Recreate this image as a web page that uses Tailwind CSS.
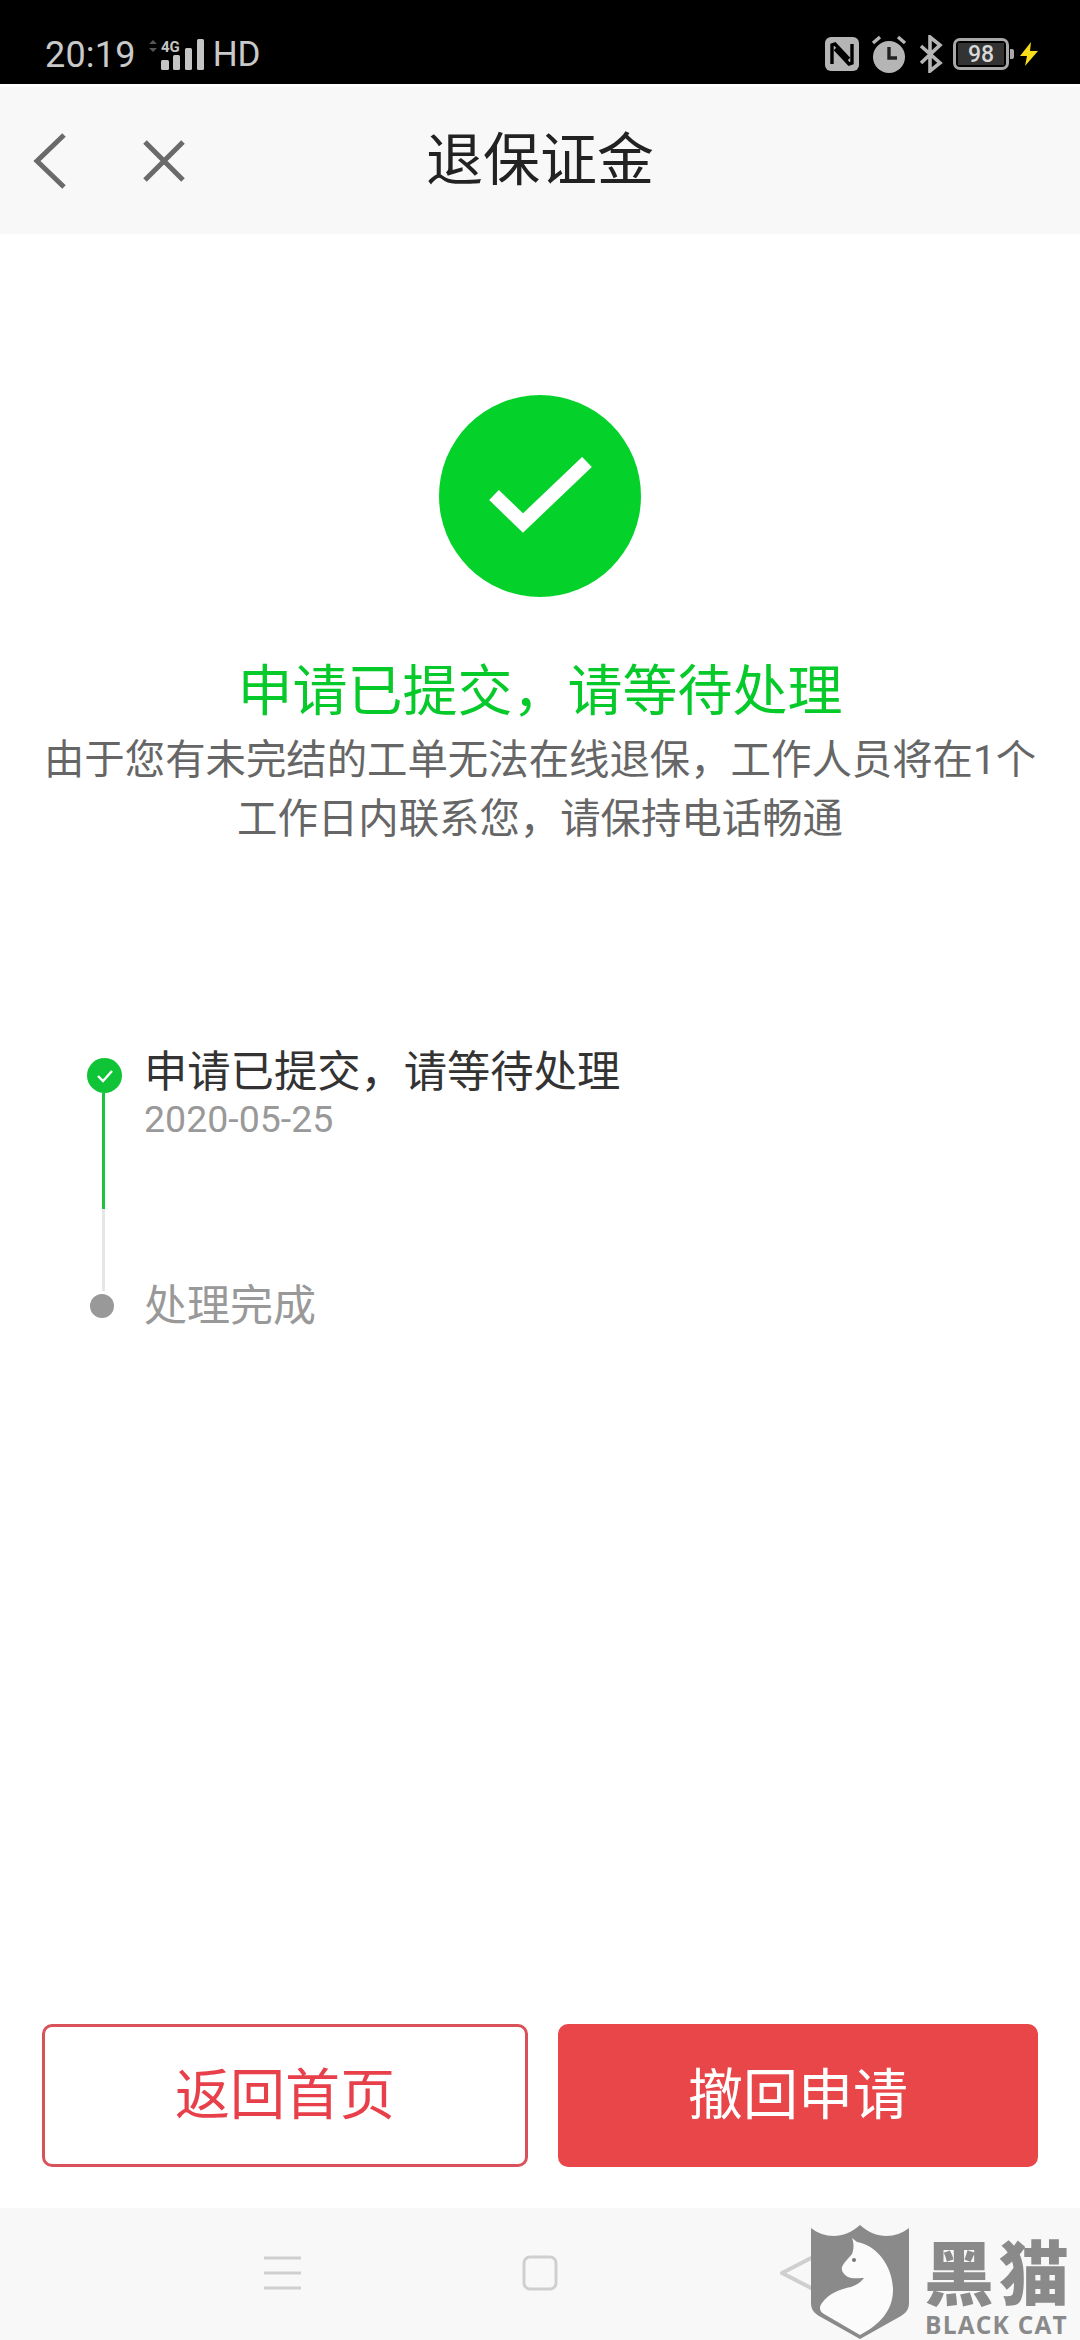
<!DOCTYPE html>
<html lang="zh-CN">
<head>
<meta charset="utf-8">
<script src="https://cdn.jsdelivr.net/npm/@tailwindcss/browser@4"></script>
</head>
<body class="m-0 bg-white">
<div class="relative flex h-[2340px] w-[1080px] flex-col overflow-hidden bg-white font-['Roboto','Noto_Sans_CJK_SC',sans-serif]">
  <!-- status bar -->
  <header class="flex h-[84px] shrink-0 items-center justify-between bg-black pt-[24px] pl-[45px] pr-[41px] text-[#c9c9c9]">
    <div class="flex items-center">
      <span class="mt-[2px] text-[36px] leading-none tracking-[0.2px]">20:19</span>
      <svg class="ml-[11px]" width="75" height="36" viewBox="0 0 75 36" fill="#c4c4c4">
        <path d="M2 8l4-4 4 4z M2 12l4 4 4-4z" fill="#555"/>
        <text x="14" y="16" font-size="15" font-weight="700" fill="#c4c4c4" font-family="Roboto">4G</text>
        <rect x="14" y="24" width="8" height="10" rx="1.5"/>
        <rect x="26" y="19" width="7" height="15" rx="1.5"/>
        <rect x="38" y="12" width="7" height="22" rx="1.5"/>
        <rect x="50" y="3" width="7" height="31" rx="1.5"/>
      </svg>
      <span class="ml-[-9px] mt-[1px] text-[35px] leading-none">HD</span>
    </div>
    <div class="flex items-center">
      <svg width="34" height="34" viewBox="0 0 34 34"><rect width="34" height="34" rx="6" fill="#b5b5b5"/><path d="M7 27V8l3-1 14 15M27 7v19l-3 1L10 12" fill="none" stroke="#000" stroke-width="3.4"/></svg>
      <svg class="ml-[12px]" width="36" height="38" viewBox="0 0 36 38"><path d="M2 8l7-6M34 8l-7-6" stroke="#b5b5b5" stroke-width="3.4" fill="none"/><circle cx="18" cy="22" r="16" fill="#b5b5b5"/><path d="M18 12v11h8" stroke="#222" stroke-width="3.4" fill="none"/></svg>
      <svg class="ml-[12px]" width="24" height="38" viewBox="0 0 24 38"><path d="M2 11l19 17-10 8V2l10 8L2 28" fill="none" stroke="#b5b5b5" stroke-width="3.6"/></svg>
      <div class="relative ml-[10px] flex h-[32px] w-[56px] items-center justify-center rounded-[7px] border-[3px] border-[#a8a8a8] bg-black p-[2px]">
        <span class="flex h-full w-full items-center justify-center bg-[#333] text-[23px] font-medium leading-none text-[#d8d8d8]">98</span>
        <span class="absolute right-[-8px] top-[8px] h-[10px] w-[4px] rounded-r-[2px] bg-[#a8a8a8]"></span>
      </div>
      <svg class="ml-[10px]" width="20" height="24" viewBox="0 0 20 24"><path d="M12 0L1 14h7l-2 10L19 9h-8z" fill="#f6dc1a"/></svg>
    </div>
  </header>
  <div class="h-[3px] shrink-0 bg-white"></div>
  <!-- nav -->
  <nav class="relative flex h-[147px] shrink-0 items-center bg-[#f8f8f8]">
    <svg class="ml-[33px]" width="34" height="56" viewBox="0 0 34 56"><path d="M31 2L4 28l27 26" fill="none" stroke="#6a6a6a" stroke-width="5"/></svg>
    <svg class="ml-[75px]" width="44" height="44" viewBox="0 0 44 44"><path d="M3 3l38 38M41 3L3 41" fill="none" stroke="#6a6a6a" stroke-width="5"/></svg>
    <h1 class="absolute inset-x-0 text-center text-[57px] font-normal leading-none text-[#222]">退保证金</h1>
  </nav>
  <!-- content -->
  <main class="flex flex-1 flex-col">
    <section class="flex flex-col items-center pt-[161px]">
      <div class="flex h-[202px] w-[202px] items-center justify-center rounded-full bg-[#04d12a]">
        <svg width="104" height="78" viewBox="0 0 104 78"><path d="M6 38l29 28L99 5" fill="none" stroke="#fff" stroke-width="14"/></svg>
      </div>
      <h2 class="mt-[62px] text-[55px] font-normal leading-[64px] text-[#06c92a]">申请已提交，请等待处理</h2>
      <p class="mt-[8px] w-[1000px] text-center text-[40.4px] leading-[59px] text-[#666]">由于您有未完结的工单无法在线退保，工作人员将在1个<br>工作日内联系您，请保持电话畅通</p>
    </section>
    <section class="mt-[209px] flex pl-[87px]">
      <div class="flex w-[57px] shrink-0 flex-col">
        <div class="flex h-[35px] w-[35px] items-center justify-center rounded-full bg-[#0fc437]">
          <svg width="18" height="14" viewBox="0 0 18 14"><path d="M2 7l5 5L16 2" fill="none" stroke="#fff" stroke-width="2.4"/></svg>
        </div>
        <div class="ml-[15px] h-[116px] w-[3px] bg-[#1cc43c]"></div>
        <div class="ml-[15px] h-[82px] w-[3px] bg-[#e6e6e6]"></div>
        <div class="ml-[3px] mt-[3px] h-[24px] w-[24px] rounded-full bg-[#999]"></div>
      </div>
      <div class="flex flex-col">
        <div class="mt-[-11px] text-[43.3px] leading-[52px] text-[#333]">申请已提交，请等待处理</div>
        <div class="mt-[-2px] text-[37.5px] leading-[44px] text-[#999]">2020-05-25</div>
        <div class="mt-[139px] text-[43px] leading-[52px] text-[#999]">处理完成</div>
      </div>
    </section>
  </main>
  <!-- actions -->
  <section class="flex h-[143px] shrink-0 gap-[30px] px-[42px]">
    <button class="flex-1 rounded-[10px] border-[3px] border-[#d9525a] bg-white text-[55px] leading-none text-[#e8404a]">返回首页</button>
    <button class="flex-1 rounded-[10px] bg-[#e84649] text-[55px] leading-none text-white">撤回申请</button>
  </section>
  <div class="h-[41px] shrink-0 bg-white"></div>
  <!-- system nav -->
  <footer class="flex h-[132px] shrink-0 items-center bg-[#f8f8f8] pb-[3px]">
    <svg class="ml-[264px]" width="37" height="36" viewBox="0 0 37 36"><path d="M0 3h37M0 18h37M0 33h37" stroke="#cfcfcf" stroke-width="3"/></svg>
    <svg class="ml-[221px]" width="36" height="36" viewBox="0 0 36 36"><rect x="2" y="2" width="32" height="32" rx="6" fill="none" stroke="#cfcfcf" stroke-width="3"/></svg>
    <svg class="ml-[220px]" width="40" height="40" viewBox="0 0 40 40"><path d="M37 3L4 20l33 17" fill="none" stroke="#cfcfcf" stroke-width="4" stroke-linejoin="round"/></svg>
  </footer>
  <!-- watermark -->
  <div class="absolute left-[811px] top-[2225px] h-[114px] w-[269px] text-[#8a8a8a]">
    <svg class="absolute left-0 top-0" width="98" height="114" viewBox="0 0 98 114">
      <path d="M0 3c14 11 34 11 49-3 15 14 35 14 49 3v75c0 6-3 10-8 13l-41 23-41-23c-5-3-8-7-8-13z" fill="#8a8a8a"/>
      <path d="M41 13l5 4C66 20 82 42 82 65C82 86 68 100 49 110L13 89C8 86 8 82 11 78C18 68 30 64 40 62C46 60 50 57 53 53C46 53 41 54 37 52C33 50 30 46 31 42C33 37 38 33 41 29C43 24 43 18 41 13z" fill="#fbfbfb"/>
      <circle cx="43" cy="35" r="2" fill="#777"/>
    </svg>
    <div class="absolute left-[113px] top-[9px] whitespace-nowrap font-['Noto_Sans_CJK_SC',sans-serif] text-[70px] font-black leading-[72px] tracking-[5px]">黑猫</div>
    <div class="absolute left-[114px] top-[88px] whitespace-nowrap font-['Open_Sans',sans-serif] text-[24.5px] font-bold leading-[24px] tracking-[1.2px]">BLACK CAT</div>
  </div>
</div>
</body>
</html>
